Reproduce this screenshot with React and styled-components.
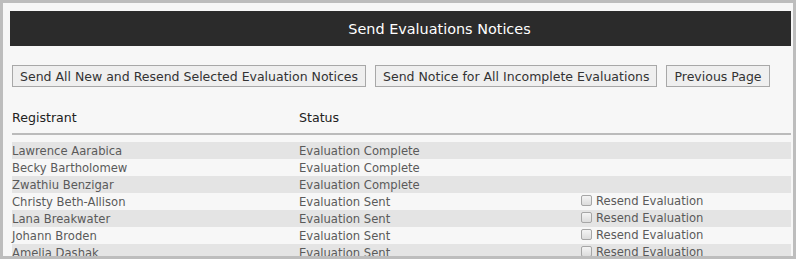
import React from "react";
import styled, { createGlobalStyle } from "styled-components";

const GlobalStyle = createGlobalStyle`
  html, body {
    margin: 0;
    padding: 0;
    background: #ffffff;
  }
  body {
    font-family: "DejaVu Sans", "Liberation Sans", sans-serif;
  }
`;

const Frame = styled.div`
  box-sizing: border-box;
  width: 796px;
  height: 259px;
  border: 3px solid #bdbdbd;
  background: #f7f7f7;
  padding: 8px 2px 0 7px;
  overflow: hidden;
`;

const TitleBar = styled.div`
  height: 35px;
  background: #2b2b2b;
  color: #ffffff;
  display: flex;
  align-items: center;
  justify-content: center;
  padding-left: 78px;
  font-size: 14.4px;
`;

const Toolbar = styled.div`
  display: flex;
  gap: 9px;
  margin: 19px 0 0 2px;
`;

const Button = styled.button`
  height: 22px;
  padding: 0 7px;
  border: 1px solid #a8a8a8;
  background: #efefef;
  color: #333333;
  font-family: inherit;
  font-size: 12.5px;
  cursor: pointer;
`;

const Table = styled.table`
  width: calc(100% - 2px);
  margin-left: 2px;
  border-collapse: collapse;
  margin-top: 14px;
`;

const HeadCell = styled.th`
  text-align: left;
  font-weight: normal;
  font-size: 12.6px;
  color: #222222;
  height: 32px;
  padding: 0;
  border-bottom: 2px solid #bbbbbb;
  width: ${(p) => p.$w || "auto"};
`;

const Spacer = styled.tr`
  height: 8px;
`;

const Row = styled.tr`
  height: 17px;
  background: ${(p) => (p.$alt ? "#e4e4e4" : "#f7f7f7")};
`;

const Cell = styled.td`
  padding: 0;
  font-size: 11.6px;
  color: #5a5a5a;
  white-space: nowrap;
`;

const CheckLabel = styled.label`
  display: inline-flex;
  align-items: center;
  gap: 4px;
`;

const Check = styled.input.attrs({ type: "checkbox" })`
  appearance: none;
  margin: 0;
  width: 11px;
  height: 11px;
  border: 1px solid #a6a6a6;
  border-radius: 2px;
  background: linear-gradient(#f4f4f4, #dcdcdc);
  box-sizing: border-box;
`;

const rows = [
  { name: "Lawrence Aarabica", status: "Evaluation Complete" },
  { name: "Becky Bartholomew", status: "Evaluation Complete" },
  { name: "Zwathiu Benzigar", status: "Evaluation Complete" },
  { name: "Christy Beth-Allison", status: "Evaluation Sent", resend: true },
  { name: "Lana Breakwater", status: "Evaluation Sent", resend: true },
  { name: "Johann Broden", status: "Evaluation Sent", resend: true },
  { name: "Amelia Dashak", status: "Evaluation Sent", resend: true },
];

export default function App() {
  return (
    <>
      <GlobalStyle />
      <Frame>
        <TitleBar>Send Evaluations Notices</TitleBar>
        <Toolbar>
          <Button>Send All New and Resend Selected Evaluation Notices</Button>
          <Button>Send Notice for All Incomplete Evaluations</Button>
          <Button>Previous Page</Button>
        </Toolbar>
        <Table>
          <thead>
            <tr>
              <HeadCell $w="287px">Registrant</HeadCell>
              <HeadCell $w="282px">Status</HeadCell>
              <HeadCell />
            </tr>
          </thead>
          <tbody>
            <Spacer />
            {rows.map((r, i) => (
              <Row key={r.name} $alt={i % 2 === 0}>
                <Cell>{r.name}</Cell>
                <Cell>{r.status}</Cell>
                <Cell>
                  {r.resend && (
                    <CheckLabel>
                      <Check />
                      Resend Evaluation
                    </CheckLabel>
                  )}
                </Cell>
              </Row>
            ))}
          </tbody>
        </Table>
      </Frame>
    </>
  );
}
